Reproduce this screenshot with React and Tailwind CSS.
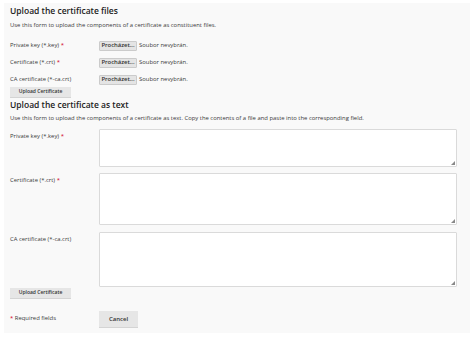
export default function App() {
  const font = { fontFamily: '"Open Sans", "Noto Sans", sans-serif' };
  const Req = () => <span className="text-[#d0021b]"> *</span>;
  const FileRow = ({ label, req }) => (
    <div className="flex items-center h-[17px]">
      <div className="w-[89px] text-[5.9px] text-[#3a3a3a]">
        {label}
        {req && <Req />}
      </div>
      <div className="flex items-center">
        <div className="h-[10px] w-[38px] flex items-center justify-center bg-[#e4e4e4] border border-[#cbcbcb] rounded-[1px] text-[5.9px] font-semibold text-[#333]">
          Procházet...
        </div>
        <span className="ml-[2px] text-[5.9px] text-[#3a3a3a]">Soubor nevybrán.</span>
      </div>
    </div>
  );
  const Btn = ({ children }) => (
    <div className="w-[61px] h-[11px] flex items-center justify-center bg-[#e6e6e6] border-b border-[#d4d4d4] text-[5px] font-semibold text-[#333]">
      {children}
    </div>
  );
  const AreaRow = ({ label, req, h, mt }) => (
    <div className={`flex ${mt}`}>
      <div className="w-[89px] pt-[3px] text-[5.9px] text-[#3a3a3a]">
        {label}
        {req && <Req />}
      </div>
      <div className="relative">
        <textarea
          className="w-[358px] bg-white border border-[#dadada] rounded-[1px] resize-none block"
          style={{ height: h }}
        />
        <svg className="absolute right-[2px] bottom-[2px]" width="4" height="4" viewBox="0 0 4 4">
          <path d="M4 0 L4 4 L0 4 Z" fill="#888" />
        </svg>
      </div>
    </div>
  );
  return (
    <div className="w-[474px] h-[338px] bg-white overflow-hidden" style={font}>
      <div className="ml-[4px] mt-[3px] w-[466px] h-[330px] bg-[#f9f9f9] pl-[6px] pt-[3px]">
        <div className="text-[8.5px] font-semibold text-[#222] leading-[10px]">
          Upload the certificate files
        </div>
        <div className="text-[5.9px] text-[#3a3a3a] mt-[6px] leading-[7px]">
          Use this form to upload the components of a certificate as constituent files.
        </div>
        <div className="mt-[8px]">
          <FileRow label="Private key (*.key)" req />
          <FileRow label="Certificate (*.crt)" req />
          <FileRow label="CA certificate (*-ca.crt)" />
        </div>
        <div className="mt-[-1px]">
          <Btn>Upload Certificate</Btn>
        </div>
        <div className="text-[8.5px] font-semibold text-[#222] leading-[10px] mt-[2px]">
          Upload the certificate as text
        </div>
        <div className="text-[5.9px] text-[#3a3a3a] mt-[5px] leading-[7px]">
          Use this form to upload the components of a certificate as text. Copy the contents of a file and paste into the corresponding field.
        </div>
        <AreaRow label="Private key (*.key)" req h="38px" mt="mt-[7px]" />
        <AreaRow label="Certificate (*.crt)" req h="52px" mt="mt-[6px]" />
        <AreaRow label="CA certificate (*-ca.crt)" h="55px" mt="mt-[7px]" />
        <div className="mt-[1px]">
          <Btn>Upload Certificate</Btn>
        </div>
        <div className="flex mt-[12px]">
          <div className="w-[89px] pt-[3px] text-[5.9px] text-[#3a3a3a]">
            <span className="text-[#d0021b]">*</span> Required fields
          </div>
          <div className="w-[39px] h-[17px] flex items-center justify-center bg-[#e6e6e6] border-b border-[#d4d4d4] text-[6px] font-semibold text-[#333]">
            Cancel
          </div>
        </div>
      </div>
    </div>
  );
}
